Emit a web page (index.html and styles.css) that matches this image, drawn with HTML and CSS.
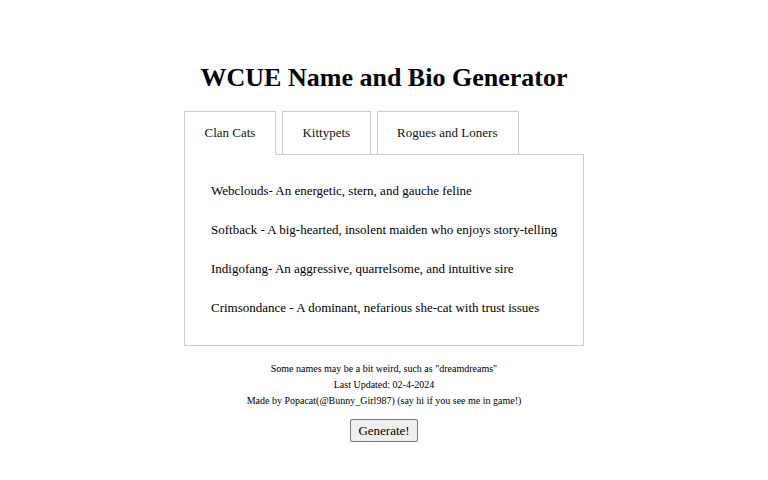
FILE: index.html
```html
<!DOCTYPE html>
<html lang="en">
  <head>
    <meta charset="UTF-8" />
    <meta name="viewport" content="width=device-width, initial-scale=1.0" />
    <title>WCUE Name and Bio Generator</title>
    <link rel="stylesheet" href="styles.css">
  </head>
  <body>
    <div class="page">
      <h1 class="title">WCUE Name and Bio Generator</h1>

      <div class="tabs">
        <div class="tab-bar">
          <button class="tab active">Clan Cats</button>
          <button class="tab">Kittypets</button>
          <button class="tab">Rogues and Loners</button>
        </div>
        <div class="tab-panel">
          <p class="bio">Webclouds- An energetic, stern, and gauche feline</p>
          <p class="bio">Softback - A big-hearted, insolent maiden who enjoys story-telling</p>
          <p class="bio">Indigofang- An aggressive, quarrelsome, and intuitive sire</p>
          <p class="bio">Crimsondance - A dominant, nefarious she-cat with trust issues</p>
        </div>
      </div>

      <div class="notes">
        <p>Some names may be a bit weird, such as "dreamdreams"</p>
        <p>Last Updated: 02-4-2024</p>
        <p>Made by Popacat(@Bunny_Girl987) (say hi if you see me in game!)</p>
      </div>

      <button class="generate">Generate!</button>
    </div>
  </body>
</html>
```

FILE: styles.css
```css
body {
  margin: 0;
  background: #ffffff;
  color: #000000;
  font-family: "Liberation Serif", "Times New Roman", serif;
}

.page {
  display: flex;
  flex-direction: column;
  align-items: center;
  padding-top: 62px;
}

.title {
  margin: 0 0 17px;
  font-size: 26px;
  line-height: 32px;
  font-weight: bold;
}

.tabs {
  width: 400px;
}

.tab-bar {
  display: flex;
  gap: 6px;
}

.tab {
  font-family: inherit;
  font-size: 13px;
  color: #111111;
  background: #ffffff;
  border: 1px solid #cccccc;
  padding: 13px 19.5px;
  margin-bottom: -1px;
  cursor: pointer;
}

.tab:last-child {
  padding-right: 20.5px;
}

.tab.active {
  border-bottom-color: #ffffff;
  position: relative;
  z-index: 1;
}

.tab-panel {
  border: 1px solid #cccccc;
  padding: 4px 16px 6px 26px;
}

.bio {
  margin: 24px 0;
  font-size: 13px;
  line-height: 15px;
  white-space: nowrap;
}

.notes {
  margin-top: 15px;
  text-align: center;
  font-size: 10px;
}

.notes p {
  margin: 0;
  line-height: 16px;
}

.generate {
  margin-top: 10px;
  font-family: inherit;
  font-size: 13px;
  padding: 3px 7px 2px;
  background: #efefef;
  border: 1px solid #767676;
  border-radius: 2px;
}
```
